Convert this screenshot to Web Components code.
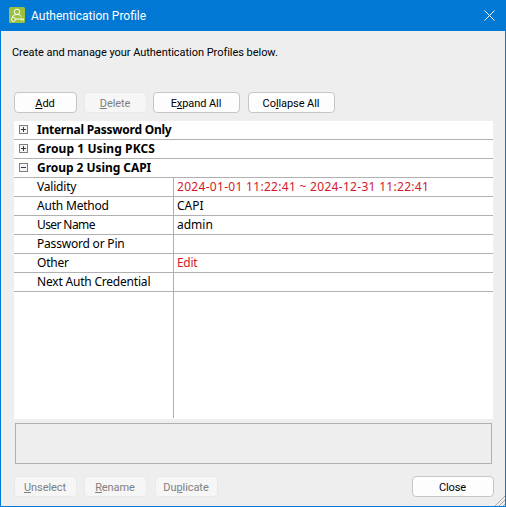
<!DOCTYPE html>
<html lang="en">
<head>
<meta charset="UTF-8">
<title>Authentication Profile</title>
<style>
    html, body { margin: 0; padding: 0; background: #eeeeee; }
    body { font: 11px Roboto, "Noto Sans CJK KR", sans-serif; color: #000; }
</style>
<script>
    // window title bar with the app icon and the close cross
    class TitleBar extends HTMLElement {
        constructor() {
            super();
            this.attachShadow({ mode: "open" });
            this.shadowRoot.innerHTML = `
            <style>
                :host { display: flex; align-items: center; height: 31px; background: #0078d4; color: #fff; padding-left: 9px; padding-right: 11px; font: 12px Roboto, sans-serif; }
                .icon { width: 16px; height: 16px; margin-top: -1px; margin-right: 6px; flex: none; }
                .title { flex: 1; }
                .close { width: 11px; height: 11px; margin-top: -1px; flex: none; }
            </style>
            <svg class="icon" viewBox="0 0 16 16">
                <rect width="16" height="16" rx="1.5" fill="#9cc13f"/>
                <g fill="none" stroke="#fff" stroke-width="1">
                    <circle cx="8" cy="4.8" r="2.7"/>
                    <path d="M3.4 10C4 8.2 6 7.5 8 7.5c2 0 3.5.7 4.2 2.1"/>
                    <circle cx="4.4" cy="12.4" r="2"/>
                    <path d="M6.4 12h8.4M12.4 12v1.6M14.4 12v1.6"/>
                </g>
            </svg>
            <span class="title"><slot></slot></span>
            <svg class="close" viewBox="0 0 11 11"><path d="M.5.5l10 10M10.5.5l-10 10" stroke="#fff" stroke-width="1" fill="none"/></svg>`;
        }
    }

    // push button, "disabled" gives the greyed look
    class DlgButton extends HTMLElement {
        constructor() {
            super();
            this.attachShadow({ mode: "open" });
            this.shadowRoot.innerHTML = `
            <style>
                :host { display: flex; align-items: center; justify-content: center; box-sizing: border-box; height: 21px; padding-top: 1px; padding-right: 1px; border: 1px solid #c6c6c6; border-radius: 4px; background: #fdfdfd; font-size: 11px; letter-spacing: -.08px; }
                :host([disabled]) { background: #f6f6f6; border-color: #e9e9e9; color: #7f7f7f; }
            </style>
            <slot></slot>`;
        }
        static get observedAttributes() { return ["width"]; }
        attributeChangedCallback(name, oldValue, newValue) {
            if (name == "width") this.style.width = newValue + "px";
        }
    }

    // collapsed or expanded group header of the tree
    class TreeGroup extends HTMLElement {
        constructor() {
            super();
            this.attachShadow({ mode: "open" });
            this.shadowRoot.innerHTML = `
            <style>
                :host { display: flex; align-items: center; box-sizing: border-box; height: 19px; padding-bottom: 2px; border-bottom: 1px solid #b0b0b0; font: bold 12px "Noto Sans", sans-serif; letter-spacing: -.25px; padding-left: 5px; }
                svg { width: 9px; height: 9px; margin-right: 9px; flex: none; }
            </style>
            <svg viewBox="0 0 9 9">
                <rect x=".5" y=".5" width="8" height="8" fill="#f4f4f4" stroke="#7f7f7f"/>
                <path id="mark" d="M2 4.5h5" stroke="#2b3a55" fill="none"/>
            </svg>
            <slot></slot>`;
        }
        connectedCallback() {
            if (!this.hasAttribute("open"))
                this.shadowRoot.querySelector("#mark").setAttribute("d", "M2 4.5h5M4.5 2v5");
        }
    }

    // one label and value row of an opened group
    class PropRow extends HTMLElement {
        constructor() {
            super();
            this.attachShadow({ mode: "open" });
            this.shadowRoot.innerHTML = `
            <style>
                :host { display: flex; box-sizing: border-box; height: 19px; border-bottom: 1px solid #b0b0b0; font: 12px/18px "Noto Sans", sans-serif; }
                .label { box-sizing: border-box; width: 160px; padding-left: 23px; border-right: 1px solid #b0b0b0; flex: none; letter-spacing: -.2px; }
                .value { padding-left: 3px; white-space: nowrap; }
                :host([alert]) .value { color: #d5182a; }
            </style>
            <div class="label"><slot name="label"></slot></div>
            <div class="value"><slot></slot></div>`;
        }
    }

    // white profile list, the column line runs on below the last row
    class ProfileTree extends HTMLElement {
        constructor() {
            super();
            this.attachShadow({ mode: "open" });
            this.shadowRoot.innerHTML = `
            <style>
                :host { display: flex; flex-direction: column; height: 298px; background: #fff; margin-left: 13px; margin-right: 12px; }
                .rest { flex: 1; margin-bottom: 1px; margin-left: 159px; border-left: 1px solid #b0b0b0; }
            </style>
            <slot></slot>
            <div class="rest"></div>`;
        }
    }

    class StatusBox extends HTMLElement {
        constructor() {
            super();
            this.attachShadow({ mode: "open" });
            this.shadowRoot.innerHTML = `
            <style>
                :host { display: block; box-sizing: border-box; height: 41px; margin: 4px 13px 0 14px; border: 1px solid #b0b0b0; }
            </style>`;
        }
    }

    class ButtonRow extends HTMLElement {
        constructor() {
            super();
            this.attachShadow({ mode: "open" });
            this.shadowRoot.innerHTML = `
            <style>
                :host { display: flex; align-items: center; padding-left: 13px; padding-right: 11px; }
                ::slotted(.far) { margin-left: auto; }
            </style>
            <slot></slot>`;
        }
    }

    // outer frame, the blue border and the resize grip
    class AuthDialog extends HTMLElement {
        constructor() {
            super();
            this.attachShadow({ mode: "open" });
            this.shadowRoot.innerHTML = `
            <style>
                :host { display: flex; flex-direction: column; position: relative; box-sizing: border-box; width: 506px; height: 507px; border: 1px solid #0078d4; border-top: 0; background: #eeeeee; }
                .grip { position: absolute; right: 0; bottom: 0; width: 12px; height: 12px; }
            </style>
            <slot></slot>
            <svg class="grip" viewBox="0 0 12 12"><path d="M2 12L12 2M6 12l6-6M10 12l2-2" stroke="#a8a8a8" stroke-width="1" fill="none"/></svg>`;
        }
    }

    customElements.define("title-bar", TitleBar);
    customElements.define("dlg-button", DlgButton);
    customElements.define("tree-group", TreeGroup);
    customElements.define("prop-row", PropRow);
    customElements.define("profile-tree", ProfileTree);
    customElements.define("status-box", StatusBox);
    customElements.define("button-row", ButtonRow);
    customElements.define("auth-dialog", AuthDialog);
</script>
</head>
<body>
    <auth-dialog>
        <title-bar style="margin:0 -1px">Authentication Profile</title-bar>
        <div style="margin:13px 0 0 11px;height:48px;line-height:17px;letter-spacing:-.04px">Create and manage your Authentication Profiles below.</div>
        <button-row style="margin-bottom:8px">
            <dlg-button width="63"><u>A</u>dd</dlg-button>
            <dlg-button width="63" disabled style="margin-left:7px"><u>D</u>elete</dlg-button>
            <dlg-button width="87" style="margin-left:6px">E<u>x</u>pand All</dlg-button>
            <dlg-button width="87" style="margin-left:8px">Co<u>l</u>lapse All</dlg-button>
        </button-row>
        <profile-tree>
            <tree-group>Internal Password Only</tree-group>
            <tree-group style="letter-spacing:.08px">Group 1 Using PKCS</tree-group>
            <tree-group open style="letter-spacing:-.05px">Group 2 Using CAPI</tree-group>
            <prop-row alert><span slot="label">Validity</span><span style="letter-spacing:.3px">2024-01-01 11:22:41 ~ 2024-12-31 11:22:41</span></prop-row>
            <prop-row><span slot="label">Auth Method</span>CAPI</prop-row>
            <prop-row><span slot="label" style="letter-spacing:-.6px">User Name</span>admin</prop-row>
            <prop-row><span slot="label">Password or Pin</span></prop-row>
            <prop-row alert><span slot="label">Other</span><span style="letter-spacing:-.3px">Edit</span></prop-row>
            <prop-row><span slot="label">Next Auth Credential</span></prop-row>
        </profile-tree>
        <status-box></status-box>
        <button-row style="margin-top:12px">
            <dlg-button width="63" disabled><u>U</u>nselect</dlg-button>
            <dlg-button width="63" disabled style="margin-left:7px"><u>R</u>ename</dlg-button>
            <dlg-button width="63" disabled style="margin-left:8px">Du<u>p</u>licate</dlg-button>
            <dlg-button class="far" width="82">Close</dlg-button>
        </button-row>
    </auth-dialog>
</body>
</html>
